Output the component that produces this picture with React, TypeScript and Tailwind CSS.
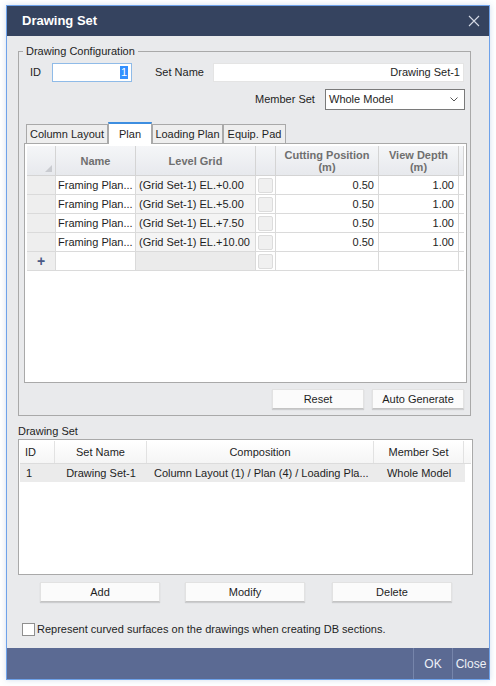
import { useState } from "react";

const planRows = [
  { name: "Framing Plan...", level: "(Grid Set-1) EL.+0.00", cut: "0.50", depth: "1.00" },
  { name: "Framing Plan...", level: "(Grid Set-1) EL.+5.00", cut: "0.50", depth: "1.00" },
  { name: "Framing Plan...", level: "(Grid Set-1) EL.+7.50", cut: "0.50", depth: "1.00" },
  { name: "Framing Plan...", level: "(Grid Set-1) EL.+10.00", cut: "0.50", depth: "1.00" },
];

const tabs = [
  { label: "Column Layout", w: "w-[82px]" },
  { label: "Plan", w: "w-[44px]" },
  { label: "Loading Plan", w: "w-[71px]" },
  { label: "Equip. Pad", w: "w-[63px]" },
];

const cell = "border-r border-b border-[#dadada] h-[19px] flex items-center";

const DisabledCheck = () => (
  <div className={`${cell} justify-center bg-white`}>
    <div className="w-[15px] h-[15px] border border-[#dcdcdc] bg-[#f0f0f0] rounded-[2px]" />
  </div>
);

const PlanGrid = () => (
  <div className="grid grid-cols-[29px_80px_120px_20px_103px_80px_5px] text-[11px]">
    {/* header */}
    <div className="h-[30px] border-r border-b border-[#d4d4d4] bg-gradient-to-b from-[#f5f6f8] to-[#e7e9ed] relative">
      <div className="absolute right-[3px] bottom-[3px] w-0 h-0 border-l-[7px] border-l-transparent border-b-[7px] border-b-[#c9cbd0]" />
    </div>
    {["Name", "Level Grid", "", "Cutting Position|(m)", "View Depth|(m)", ""].map((h, i) => (
      <div
        key={i}
        className="h-[30px] border-r border-b border-[#d4d4d4] bg-gradient-to-b from-[#f5f6f8] to-[#e7e9ed] flex flex-col items-center justify-center font-bold text-[#6f6f6f] leading-[12px]"
      >
        {h.split("|").map((t) => (
          <span key={t}>{t}</span>
        ))}
      </div>
    ))}

    {planRows.map((r, i) => (
      <div key={i} className="contents">
        <div className={`${cell} bg-[#eeeeee]`} />
        <div className={`${cell} bg-white pl-[2px]`}>{r.name}</div>
        <div className={`${cell} bg-[#f4f4f4] pl-[3px] whitespace-nowrap`}>{r.level}</div>
        <DisabledCheck />
        <div className={`${cell} bg-white justify-end pr-[4px]`}>{r.cut}</div>
        <div className={`${cell} bg-white justify-end pr-[4px]`}>{r.depth}</div>
        <div className="border-b border-[#dadada] bg-white" />
      </div>
    ))}

    {/* new row */}
    <div className={`${cell} bg-[#eeeeee] justify-center text-[#4a5a86] font-bold text-[14px]`}>+</div>
    <div className={`${cell} bg-white`} />
    <div className={`${cell} bg-[#ebebeb]`} />
    <DisabledCheck />
    <div className={`${cell} bg-white`} />
    <div className={`${cell} bg-white`} />
    <div className="border-b border-[#dadada] bg-white" />
  </div>
);

const Button = ({ label, w }: { label: string; w: string }) => (
  <button
    className={`${w} h-[20px] bg-[#fbfbfb] border border-[#e2e2e2] border-b-[#c4c4c4] shadow-[0_1px_1px_rgba(0,0,0,0.12)] text-[11px] text-[#1e1e1e] flex items-center justify-center`}
  >
    {label}
  </button>
);

export default function App() {
  const [tab, setTab] = useState(1);
  const [curved, setCurved] = useState(false);

  return (
    <div className="w-[496px] h-[686px] bg-white pt-[5px] pl-[6px] font-['Liberation_Sans',Arial,sans-serif] text-[#1e1e1e]">
      <div className="w-[484px] h-[675px] border border-[#6ea2ea] shadow-[0_0_6px_rgba(80,120,180,0.25)] flex flex-col">
        {/* title bar */}
        <div className="h-[30px] bg-[#35435f] flex items-center justify-between pl-[15px] pr-[9px]">
          <span className="text-white font-bold text-[13px]">Drawing Set</span>
          <svg width="12" height="12" viewBox="0 0 12 12">
            <path d="M1 1 L11 11 M11 1 L1 11" stroke="#d5dae4" strokeWidth="1.1" />
          </svg>
        </div>

        {/* body */}
        <div className="flex-1 bg-[#e9eaec] pl-[11px] text-[11px]">
          {/* Drawing Configuration group */}
          <div className="mt-[15px] w-[453px] h-[365px] border border-[#a9a9a9] relative">
            <span className="absolute left-[4px] top-[-8px] px-[3px] bg-[#e9eaec] leading-[14px]">
              Drawing Configuration
            </span>

            <div className="mt-[11px] flex items-center h-[19px]">
              <span className="ml-[11px] w-[22px]">ID</span>
              <div className="w-[80px] h-[19px] bg-white border border-[#8fbbe8] flex items-center justify-end pr-[3px]">
                <span className="bg-[#3390ff] text-white px-[1px] leading-[13px]">1</span>
              </div>
              <span className="ml-[23px] w-[58px]">Set Name</span>
              <div className="w-[251px] h-[19px] bg-white border border-[#e4e4e4] flex items-center justify-end pr-[3px]">
                Drawing Set-1
              </div>
            </div>

            <div className="mt-[7px] flex items-center h-[21px]">
              <span className="ml-[236px] w-[70px]">Member Set</span>
              <div className="w-[140px] h-[21px] bg-white border border-[#7a7a7a] flex items-center justify-between pl-[3px] pr-[6px]">
                <span>Whole Model</span>
                <svg width="8" height="5" viewBox="0 0 8 5">
                  <path d="M0.5 0.5 L4 4 L7.5 0.5" stroke="#555" fill="none" strokeWidth="1" />
                </svg>
              </div>
            </div>

            {/* tabs */}
            <div className="mt-[12px] ml-[7px] flex items-end h-[21px] relative z-10">
              {tabs.map((t, i) =>
                i === tab ? (
                  <div
                    key={t.label}
                    className={`${t.w} h-[22px] -mb-px bg-white border-x border-[#a9a9a9] border-t-2 border-t-[#3d8ee0] flex items-center justify-center`}
                  >
                    {t.label}
                  </div>
                ) : (
                  <div
                    key={t.label}
                    onClick={() => setTab(i)}
                    className={`${t.w} h-[19px] bg-[#eeeeee] border border-b-0 border-[#a9a9a9] flex items-center justify-center`}
                  >
                    {t.label}
                  </div>
                )
              )}
            </div>

            <div className="ml-[5px] w-[443px] h-[240px] border border-[#a9a9a9] bg-white p-[2px]">
              <PlanGrid />
            </div>

            <div className="mt-[6px] flex gap-[8px] ml-[253px]">
              <Button label="Reset" w="w-[92px]" />
              <Button label="Auto Generate" w="w-[92px]" />
            </div>
          </div>

          {/* Drawing Set list */}
          <div className="mt-[7px] leading-[16px]">Drawing Set</div>
          <div className="w-[455px] h-[136px] border border-[#a9a9a9] bg-white p-[1px]">
            <div className="grid grid-cols-[35px_92px_227px_90px_1fr] h-[23px] bg-gradient-to-b from-white to-[#f5f5f5] border-b border-[#dcdcdc]">
              <div className="flex items-center pl-[5px] border-r border-[#e2e2e2]">ID</div>
              <div className="flex items-center justify-center border-r border-[#e2e2e2]">Set Name</div>
              <div className="flex items-center justify-center border-r border-[#e2e2e2]">Composition</div>
              <div className="flex items-center justify-center border-r border-[#e2e2e2]">Member Set</div>
              <div />
            </div>
            <div className="grid grid-cols-[35px_92px_227px_90px] h-[18px] bg-[#ebebeb] w-[445px]">
              <div className="flex items-center pl-[6px]">1</div>
              <div className="flex items-center justify-center">Drawing Set-1</div>
              <div className="flex items-center pl-[7px] whitespace-nowrap">
                Column Layout (1) / Plan (4) / Loading Pla...
              </div>
              <div className="flex items-center justify-center">Whole Model</div>
            </div>
          </div>

          <div className="mt-[7px] ml-[22px] flex">
            <Button label="Add" w="w-[120px]" />
            <div className="ml-[25px]">
              <Button label="Modify" w="w-[120px]" />
            </div>
            <div className="ml-[27px]">
              <Button label="Delete" w="w-[120px]" />
            </div>
          </div>

          <label className="mt-[19px] ml-[4px] flex items-center gap-[2px]">
            <span
              onClick={() => setCurved(!curved)}
              className="w-[13px] h-[13px] border border-[#8f8f8f] bg-white flex items-center justify-center text-[10px]"
            >
              {curved ? "✓" : ""}
            </span>
            <span>Represent curved surfaces on the drawings when creating DB sections.</span>
          </label>
        </div>

        {/* footer */}
        <div className="h-[31px] bg-[#5b6a93] flex justify-end text-[12px] text-[#eef1f7]">
          <div className="w-[39px] border-l border-[#7685ab] flex items-center justify-center">OK</div>
          <div className="w-[37px] border-l border-[#7685ab] flex items-center justify-center">Close</div>
        </div>
      </div>
    </div>
  );
}
